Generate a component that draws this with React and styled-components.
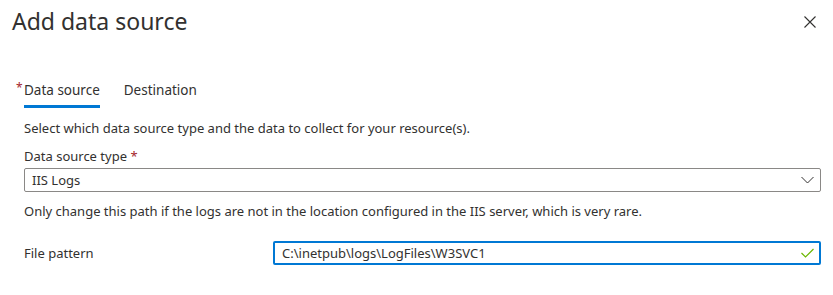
import React from 'react'
import styled, { createGlobalStyle } from 'styled-components'

const Global = createGlobalStyle`
  html, body {
    margin: 0;
    padding: 0;
    background: #fff;
  }
  body {
    font-family: "Segoe UI", "Noto Sans", "Liberation Sans", sans-serif;
    color: #323130;
  }
`

const Panel = styled.div`
  width: 833px;
  height: 295px;
  box-sizing: border-box;
  display: flex;
  flex-direction: column;
`

const Header = styled.div`
  display: flex;
  justify-content: space-between;
  align-items: flex-start;
  padding: 6px 16px 0 12px;
  height: 62px;
  box-sizing: border-box;
`

const Title = styled.h1`
  margin: 0;
  font-size: 23px;
  font-weight: 400;
  line-height: 30px;
  color: #323130;
`

const Close = styled.button`
  border: none;
  background: none;
  padding: 0;
  margin-top: 9px;
  width: 14px;
  height: 14px;
  display: flex;
  cursor: pointer;
`

const Tabs = styled.div`
  display: flex;
  gap: 24px;
  padding-left: 24px;
  margin-top: 19px;
`

const Tab = styled.div`
  position: relative;
  font-size: 13.5px;
  line-height: 18px;
  padding-bottom: 6px;
  color: #323130;
  border-bottom: 3px solid ${({ active }) => (active ? '#0078d4' : 'transparent')};
`

const TabStar = styled.span`
  position: absolute;
  left: -8px;
  top: 1px;
  line-height: 12px;
  color: #a4262c;
  font-size: 12px;
`

const Body = styled.div`
  padding: 0 12px 0 24px;
  display: flex;
  flex-direction: column;
  margin-top: 11px;
`

const Text = styled.p`
  margin: 0;
  font-size: 13px;
  line-height: 18px;
  color: #323130;
`

const Label = styled.label`
  display: block;
  font-size: 13px;
  line-height: 18px;
  margin-top: 10px;
  color: #323130;
`

const Required = styled.span`
  color: #a4262c;
`

const Select = styled.div`
  margin-top: 3px;
  height: 24px;
  box-sizing: border-box;
  border: 1px solid #8a8886;
  border-radius: 2px;
  display: flex;
  align-items: center;
  justify-content: space-between;
  padding: 0 6px 0 7px;
  font-size: 13px;
  margin-bottom: 10px;
`

const Row = styled.div`
  display: flex;
  align-items: center;
  margin-top: 21px;
`

const RowLabel = styled.div`
  width: 249px;
  font-size: 13px;
  line-height: 18px;
`

const Input = styled.div`
  flex: 1;
  height: 24px;
  box-sizing: border-box;
  border: 2px solid #0078d4;
  border-radius: 2px;
  display: flex;
  align-items: center;
  justify-content: space-between;
  padding: 0 5px 0 7px;
  font-size: 13px;
`

const App = () => {
  return (
    <>
      <Global />
      <Panel>
        <Header>
          <Title>Add data source</Title>
          <Close aria-label="Close">
            <svg width="14" height="14" viewBox="0 0 14 14">
              <path d="M1.5 1.5 L12.5 12.5 M12.5 1.5 L1.5 12.5" stroke="#323130" strokeWidth="1.1" fill="none" />
            </svg>
          </Close>
        </Header>
        <Tabs>
          <Tab active>
            <TabStar>*</TabStar>
            Data source
          </Tab>
          <Tab>Destination</Tab>
        </Tabs>
        <Body>
          <Text>Select which data source type and the data to collect for your resource(s).</Text>
          <Label>
            Data source type <Required>*</Required>
          </Label>
          <Select>
            <span>IIS Logs</span>
            <svg width="13" height="8" viewBox="0 0 13 8">
              <path d="M0.5 1 L6.5 7 L12.5 1" stroke="#323130" strokeWidth="1" fill="none" />
            </svg>
          </Select>
          <Text>Only change this path if the logs are not in the location configured in the IIS server, which is very rare.</Text>
          <Row>
            <RowLabel>File pattern</RowLabel>
            <Input>
              <span>C:\inetpub\logs\LogFiles\W3SVC1</span>
              <svg width="13" height="10" viewBox="0 0 13 10">
                <path d="M0.5 5 L4.5 9 L12.5 1" stroke="#6bb700" strokeWidth="1.2" fill="none" />
              </svg>
            </Input>
          </Row>
        </Body>
      </Panel>
    </>
  )
}

export default App
